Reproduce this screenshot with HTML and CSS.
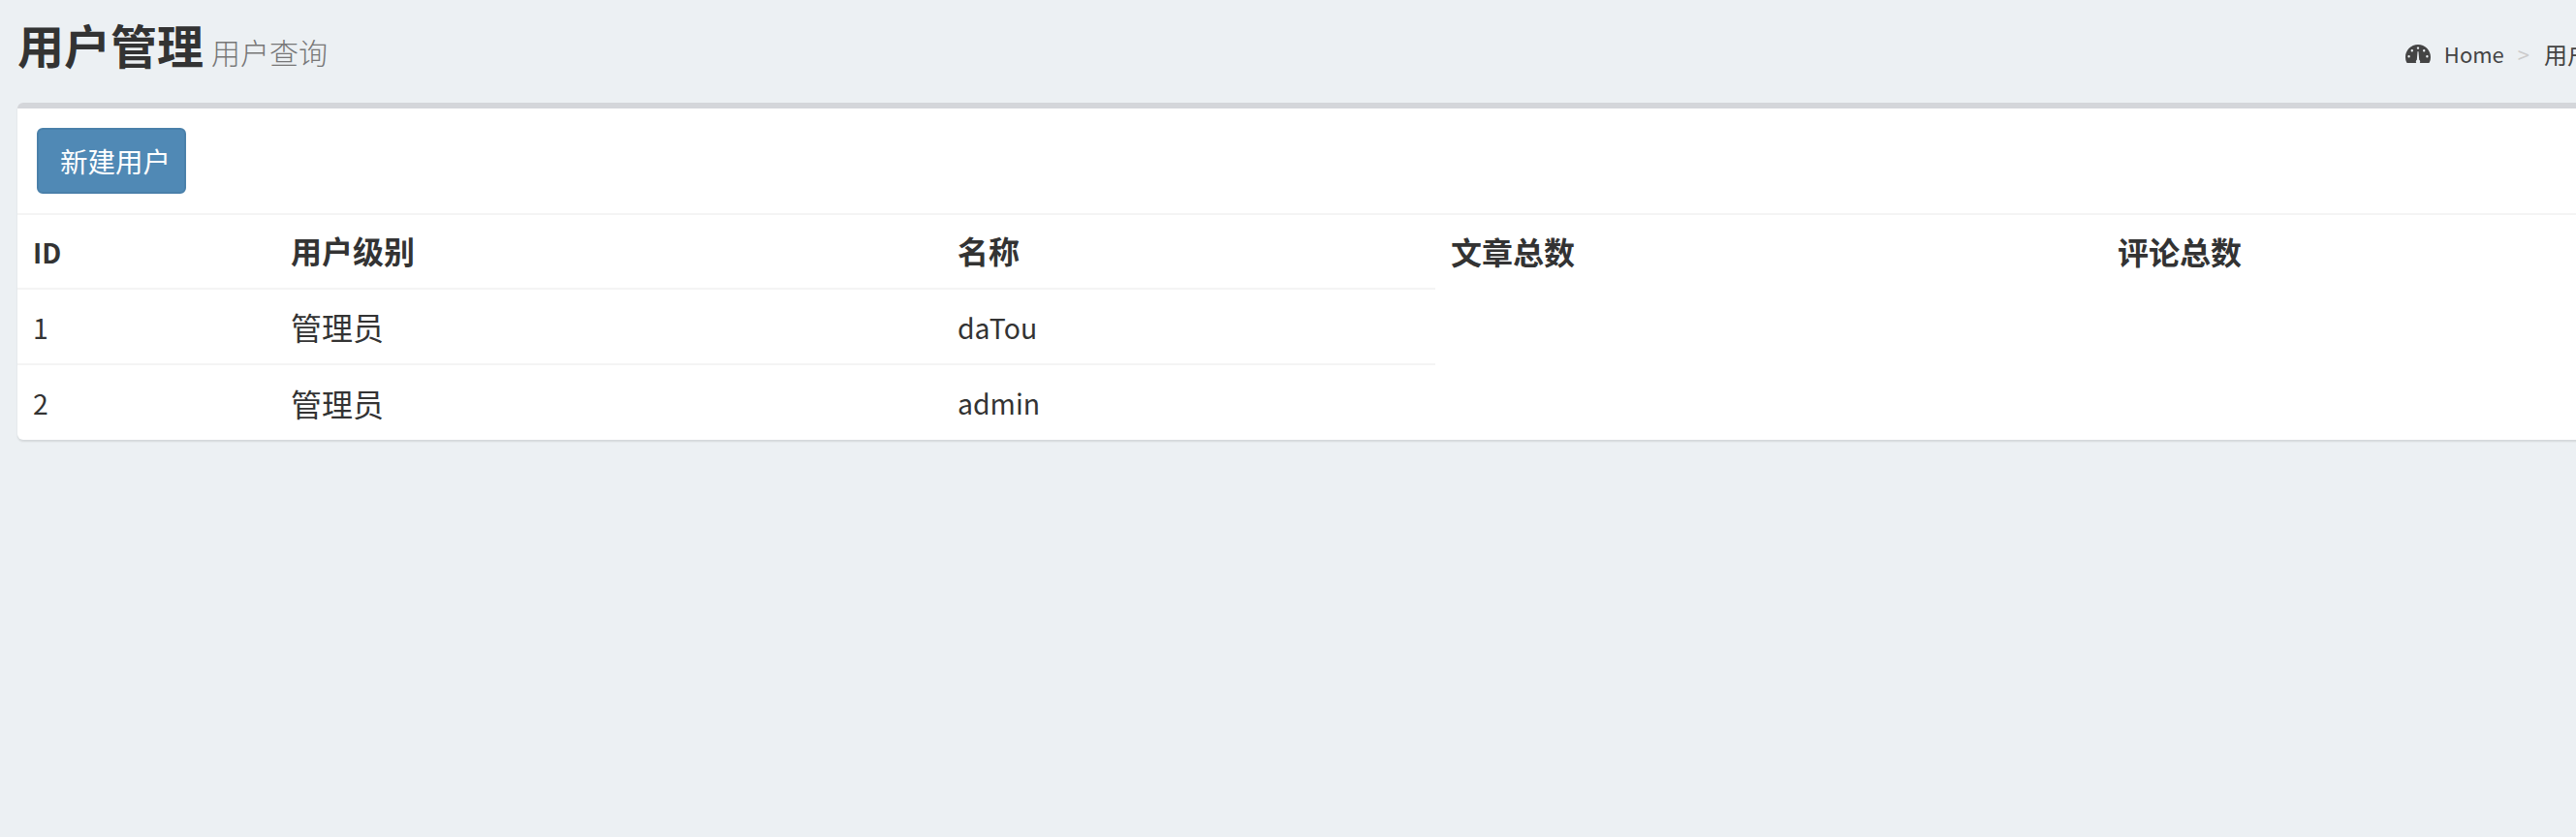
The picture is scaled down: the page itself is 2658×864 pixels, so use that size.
FILE: index.html
```html
<!DOCTYPE html>
<html lang="zh-CN">
<head>
<meta charset="utf-8">
<title>用户管理</title>
<link rel="stylesheet" href="styles.css">
</head>
<body>
<div class="page">
  <header class="content-header">
    <h1 class="title">用户管理<small class="subtitle">用户查询</small></h1>
    <ol class="breadcrumb">
      <li class="crumb">
        <svg class="gauge" viewBox="0 0 26 20" aria-hidden="true">
          <path fill-rule="evenodd" d="M13 0C5.800 0 0 5.800 0 13c0 2 .4 3.900 1.200 5.600.2.300.5.400.8.400h22c.3 0 .6-.1.800-.4.800-1.700 1.200-3.600 1.200-5.600C26 5.800 20.200 0 13 0zM13 2.400a1.200 1.200 0 1 1 0 2.400 1.200 1.200 0 0 1 0-2.400zM6.800 5a1.200 1.200 0 1 1 0 2.400 1.200 1.200 0 0 1 0-2.400zM19.200 5a1.200 1.200 0 1 1 0 2.400 1.200 1.200 0 0 1 0-2.400zM3.600 11a1.200 1.200 0 1 1 0 2.400 1.200 1.200 0 0 1 0-2.400zM22.400 11a1.200 1.200 0 1 1 0 2.400 1.200 1.200 0 0 1 0-2.400zM13.500 7.500l.7 8.200c.6.400 1 1.100 1 1.800 0 .5-.1 1-.4 1.500h-3.600c-.3-.5-.4-1-.4-1.500 0-.7.400-1.400 1-1.800l.7-8.200c.1-.7.900-.7 1 0z"/>
        </svg>
        <span class="crumb-latin">Home</span>
      </li>
      <li class="crumb-sep">&gt;</li>
      <li class="crumb">用户管理</li>
    </ol>
  </header>
  <section class="box">
    <div class="box-header">
      <button class="btn" type="button">新建用户</button>
    </div>
    <table class="table">
      <colgroup>
        <col class="col-id"><col class="col-level"><col class="col-name"><col class="col-posts"><col class="col-comments">
      </colgroup>
      <thead>
        <tr><th>ID</th><th class="cjk">用户级别</th><th class="cjk">名称</th><th class="cjk">文章总数</th><th class="cjk">评论总数</th></tr>
      </thead>
      <tbody>
        <tr><td>1</td><td class="cjk">管理员</td><td>daTou</td></tr>
        <tr><td>2</td><td class="cjk">管理员</td><td>admin</td></tr>
      </tbody>
    </table>
  </section>
</div>
</body>
</html>
```
FILE: styles.css
```css
html, body {
  margin: 0;
  padding: 0;
  height: 100%;
  overflow: hidden;
  background: #ecf0f3;
}
body {
  font-family: "Noto Sans CJK SC", "Noto Sans", sans-serif;
  color: #333;
  font-size: 28px;
}
.page {
  width: 2739px;
  padding: 0 18px;
  box-sizing: border-box;
}
.content-header {
  display: flex;
  justify-content: space-between;
  align-items: center;
  height: 106px;
}
.title {
  margin: 0;
  font-size: 48px;
  font-weight: 700;
  line-height: 52px;
  position: relative;
  top: -4px;
}
.subtitle {
  font-size: 30px;
  font-weight: 300;
  color: #777;
  margin-left: 8px;
}
.breadcrumb {
  list-style: none;
  margin: 0;
  padding: 0;
  display: flex;
  align-items: center;
  font-size: 24px;
  color: #444;
  position: relative;
  top: 2px;
}
.crumb {
  display: flex;
  align-items: center;
  gap: 14px;
}
.crumb-latin {
  font-size: 22px;
}
.crumb-sep {
  color: #ccc;
  font-size: 22px;
  margin: 0 15px 0 14px;
}
.gauge {
  width: 26px;
  height: 20px;
  fill: #444;
  margin-top: 2px;
}
.box {
  background: #fff;
  border-top: 6px solid #d4d6da;
  border-radius: 6px;
  box-shadow: 0 2px 2px rgba(0, 0, 0, .1);
}
.box-header {
  padding: 20px;
  border-bottom: 2px solid #f4f4f4;
}
.btn {
  display: block;
  width: 154px;
  height: 68px;
  padding: 0 0 2px 8px;
  background: #5089b5;
  border: 2px solid #4a80aa;
  border-radius: 6px;
  color: #fff;
  font: inherit;
  font-size: 28.5px;
}
.table {
  width: 100%;
  border-collapse: collapse;
  table-layout: fixed;
}
.col-id { width: 266px; }
.col-level { width: 688px; }
.col-name { width: 509px; }
.col-posts { width: 688px; }
.table th,
.table td {
  padding: 0 16px;
  text-align: left;
  height: 76px;
  box-sizing: border-box;
}
.table th {
  font-weight: 700;
}
.table th.cjk {
  padding-bottom: 3px;
}
.table td {
  border-top: 2px solid #f4f4f4;
  height: 78px;
  font-size: 28.4px;
}
.table .cjk {
  font-size: 32px;
}
```
